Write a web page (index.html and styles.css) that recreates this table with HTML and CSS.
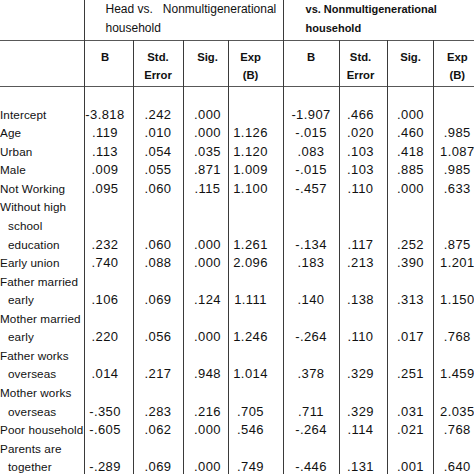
FILE: index.html
```html
<!DOCTYPE html>
<html lang="en">
<head>
<meta charset="utf-8">
<title>Regression table</title>
<link rel="stylesheet" href="styles.css">
</head>
<body>
<table class="reg">
  <colgroup>
    <col class="w-label"><col class="w-b"><col class="w-std"><col class="w-sig"><col class="w-exp">
    <col class="w-b2"><col class="w-std2"><col class="w-sig2"><col class="w-exp2">
  </colgroup>
  <tr class="grp">
    <td></td>
    <td colspan="4" class="grp-left">Head vs.&nbsp;&nbsp; Nonmultigenerational<br>household</td>
    <td colspan="4" class="grp-right">vs. Nonmultigenerational<br>household</td>
  </tr>
  <tr class="head">
    <td></td>
    <td>B</td><td>Std.<br>Error</td><td>Sig.</td><td>Exp<br>(B)</td>
    <td>B</td><td>Std.<br>Error</td><td>Sig.</td><td>Exp<br>(B)</td>
  </tr>
  <tr class="row spacer"><td></td><td></td><td></td><td></td><td></td><td></td><td></td><td></td><td></td></tr>
  <tr class="row"><td>Intercept</td><td>-3.818</td><td>.242</td><td>.000</td><td></td><td>-1.907</td><td>.466</td><td>.000</td><td></td></tr>
  <tr class="row"><td>Age</td><td>.119</td><td>.010</td><td>.000</td><td>1.126</td><td>-.015</td><td>.020</td><td>.460</td><td>.985</td></tr>
  <tr class="row"><td>Urban</td><td>.113</td><td>.054</td><td>.035</td><td>1.120</td><td>.083</td><td>.103</td><td>.418</td><td>1.087</td></tr>
  <tr class="row"><td>Male</td><td>.009</td><td>.055</td><td>.871</td><td>1.009</td><td>-.015</td><td>.103</td><td>.885</td><td>.985</td></tr>
  <tr class="row"><td>Not Working</td><td>.095</td><td>.060</td><td>.115</td><td>1.100</td><td>-.457</td><td>.110</td><td>.000</td><td>.633</td></tr>
  <tr class="row"><td>Without high</td><td></td><td></td><td></td><td></td><td></td><td></td><td></td><td></td></tr>
  <tr class="row"><td class="ind">school</td><td></td><td></td><td></td><td></td><td></td><td></td><td></td><td></td></tr>
  <tr class="row"><td class="ind">education</td><td>.232</td><td>.060</td><td>.000</td><td>1.261</td><td>-.134</td><td>.117</td><td>.252</td><td>.875</td></tr>
  <tr class="row"><td>Early union</td><td>.740</td><td>.088</td><td>.000</td><td>2.096</td><td>.183</td><td>.213</td><td>.390</td><td>1.201</td></tr>
  <tr class="row"><td>Father married</td><td></td><td></td><td></td><td></td><td></td><td></td><td></td><td></td></tr>
  <tr class="row"><td class="ind">early</td><td>.106</td><td>.069</td><td>.124</td><td>1.111</td><td>.140</td><td>.138</td><td>.313</td><td>1.150</td></tr>
  <tr class="row"><td>Mother married</td><td></td><td></td><td></td><td></td><td></td><td></td><td></td><td></td></tr>
  <tr class="row"><td class="ind">early</td><td>.220</td><td>.056</td><td>.000</td><td>1.246</td><td>-.264</td><td>.110</td><td>.017</td><td>.768</td></tr>
  <tr class="row"><td>Father works</td><td></td><td></td><td></td><td></td><td></td><td></td><td></td><td></td></tr>
  <tr class="row"><td class="ind">overseas</td><td>.014</td><td>.217</td><td>.948</td><td>1.014</td><td>.378</td><td>.329</td><td>.251</td><td>1.459</td></tr>
  <tr class="row"><td>Mother works</td><td></td><td></td><td></td><td></td><td></td><td></td><td></td><td></td></tr>
  <tr class="row"><td class="ind">overseas</td><td>-.350</td><td>.283</td><td>.216</td><td>.705</td><td>.711</td><td>.329</td><td>.031</td><td>2.035</td></tr>
  <tr class="row"><td>Poor household</td><td>-.605</td><td>.062</td><td>.000</td><td>.546</td><td>-.264</td><td>.114</td><td>.021</td><td>.768</td></tr>
  <tr class="row"><td>Parents are</td><td></td><td></td><td></td><td></td><td></td><td></td><td></td><td></td></tr>
  <tr class="row"><td class="ind">together</td><td>-.289</td><td>.069</td><td>.000</td><td>.749</td><td>-.446</td><td>.131</td><td>.001</td><td>.640</td></tr>
</table>
</body>
</html>
```
FILE: styles.css
```css
html, body {
  margin: 0;
  padding: 0;
  overflow: hidden;
  background: #ffffff;
}

body {
  font-family: "Liberation Sans", Arial, sans-serif;
  color: #111111;
}

.reg {
  border-collapse: collapse;
  border-spacing: 0;
  table-layout: fixed;
  width: 481px;
}

.w-label { width: 84px; }
.w-b { width: 49px; }
.w-std { width: 50px; }
.w-sig { width: 45px; }
.w-exp { width: 55px; }
.w-b2 { width: 56px; }
.w-std2 { width: 48px; }
.w-sig2 { width: 46px; }
.w-exp2 { width: 48px; }

.reg td {
  padding: 0;
  border-right: 1px solid #3a3a3a;
  white-space: nowrap;
  overflow: visible;
}

.reg td:last-child {
  border-right: none;
}

/* group header row */
.grp td {
  height: 40px;
  vertical-align: top;
  text-align: left;
  line-height: 19px;
}

.grp {
  border-bottom: 1px solid #585858;
}

.grp-left {
  padding-left: 21px !important;
  font-size: 12px;
  font-weight: normal;
}

.grp-right {
  padding-left: 22px !important;
  font-size: 11px;
  font-weight: bold;
}

/* column header row */
.head {
  border-bottom: 1px solid #585858;
}

.head td {
  height: 46px;
  vertical-align: top;
  text-align: center;
  padding-top: 7px;
  line-height: 18px;
  font-size: 11.3px;
  font-weight: bold;
  box-sizing: border-box;
}

/* data rows */
.row td {
  height: 18.57px;
  line-height: 18.57px;
  text-align: center;
  vertical-align: middle;
  font-size: 13px;
  letter-spacing: 0.4px;
}

.row td:first-child {
  text-align: left;
  font-size: 11.7px;
  letter-spacing: 0.1px;
}

.row td.ind {
  padding-left: 8px;
}

/* per-column horizontal offsets */
.head td:nth-child(2), .row td:nth-child(2) { padding-right: 7px; }
.head td:nth-child(4), .row td:nth-child(4) { padding-left: 4px; }
.head td:nth-child(5), .row td:nth-child(5) { padding-right: 10px; }
.head td:nth-child(7), .row td:nth-child(7) { padding-right: 5px; }
.head td:nth-child(8), .row td:nth-child(8) { padding-left: 1px; }
```
